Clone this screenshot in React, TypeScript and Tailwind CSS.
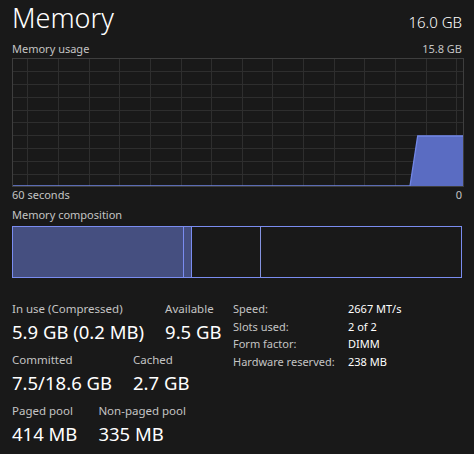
import React from "react"

const hLines = [13.5, 26.5, 39.5, 52.5, 64.5, 77.5, 90.5, 103.5, 116.5]
const vLines = [15.5, 46.5, 77.5, 107.5, 138.5, 169.5, 199.5, 230.5, 260.5, 291.5, 322.5, 352.5, 383.5, 414.5, 444.5]

function UsageGraph() {
  return (
    <svg width="452" height="129" className="block">
      <rect x="0" y="0" width="452" height="129" fill="#191919" />
      {hLines.map((y) => (
        <line key={"h" + y} x1="0" x2="452" y1={y} y2={y} stroke="#2e2e2e" strokeWidth="1" />
      ))}
      {vLines.map((x) => (
        <line key={"v" + x} x1={x} x2={x} y1="0" y2="129" stroke="#2e2e2e" strokeWidth="1" />
      ))}
      <polygon points="398,128 405.7,77.7 452,77.7 452,128" fill="#5a6cc2" />
      <polyline
        points="0,128 398,128 405.7,78 452,78"
        fill="none"
        stroke="#7186e6"
        strokeWidth="1.3"
      />
      <rect x="0.5" y="0.5" width="451" height="128" fill="none" stroke="#3e3e3e" strokeWidth="1" />
    </svg>
  )
}

function Stat({ label, value }: { label: string; value: string }) {
  return (
    <div className="flex flex-col">
      <span className="text-[11.5px] leading-[16px] text-[#c4c4c4]">{label}</span>
      <span className="mt-[3px] text-[18.5px] leading-[24px] text-white">{value}</span>
    </div>
  )
}

export default function App() {
  const rows = [
    [
      ["In use (Compressed)", "5.9 GB (0.2 MB)"],
      ["Available", "9.5 GB"],
    ],
    [
      ["Committed", "7.5/18.6 GB"],
      ["Cached", "2.7 GB"],
    ],
    [
      ["Paged pool", "414 MB"],
      ["Non-paged pool", "335 MB"],
    ],
  ]

  const info = [
    ["Speed:", "2667 MT/s"],
    ["Slots used:", "2 of 2"],
    ["Form factor:", "DIMM"],
    ["Hardware reserved:", "238 MB"],
  ]

  return (
    <div className="w-[474px] h-[454px] overflow-hidden bg-[#191919] px-3 text-white font-['Noto_Sans',sans-serif]">
      {/* Header */}
      <div className="flex items-baseline justify-between">
        <span className="text-[27px] leading-[36px] font-light">Memory</span>
        <span className="text-[15px] leading-[20px] font-light">16.0 GB</span>
      </div>

      <div className="mt-[5px] flex justify-between text-[11px] leading-[16px] text-[#c4c4c4]">
        <span>Memory usage</span>
        <span>15.8 GB</span>
      </div>

      <div className="mt-[1px]">
        <UsageGraph />
      </div>

      <div className="flex justify-between text-[11px] leading-[16px] text-[#c4c4c4]">
        <span>60 seconds</span>
        <span>0</span>
      </div>

      <div className="mt-[4px] text-[11px] leading-[16px] text-[#c4c4c4]">Memory composition</div>

      {/* Composition bar */}
      <div className="mt-[3px] flex h-[52px] border border-[#7a8cf0]">
        <div className="w-[170px] bg-[#454f80]" />
        <div className="w-[8px] border-l border-[#7a8cf0] bg-[#454f80]" />
        <div className="w-[69px] border-l border-[#7a8cf0]" />
        <div className="flex-1 border-l border-[#8593e0]" />
      </div>

      {/* Stats */}
      <div className="mt-[23px] flex items-start">
        <div className="flex w-[221px] flex-col gap-[8px]">
          {rows.map((row, i) => (
            <div key={i} className="flex gap-[21px]">
              {row.map(([l, v]) => (
                <Stat key={l} label={l} value={v} />
              ))}
            </div>
          ))}
        </div>
        <div className="-mt-[1px] grid grid-cols-[115px_1fr] text-[11px] leading-[17.5px]">
          {info.map(([l, v]) => (
            <React.Fragment key={l}>
              <span className="text-[#c4c4c4]">{l}</span>
              <span className="text-white">{v}</span>
            </React.Fragment>
          ))}
        </div>
      </div>
    </div>
  )
}
